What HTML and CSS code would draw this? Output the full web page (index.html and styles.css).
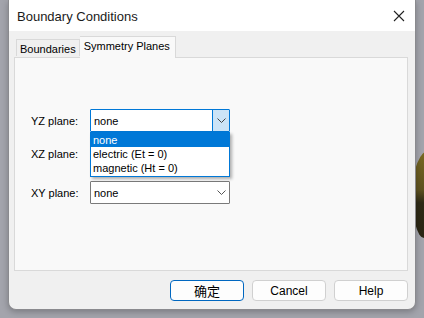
FILE: index.html
```html
<!DOCTYPE html>
<html>
<head>
<meta charset="utf-8">
<link rel="stylesheet" href="styles.css">
</head>
<body>
<div class="desktop">
  <div class="shape shape-top"></div>
  <div class="shape shape-right"></div>
  <div class="window">
    <div class="titlebar">
      <span class="title">Boundary Conditions</span>
      <svg class="close" width="12" height="12" viewBox="0 0 12 12"><path d="M1 1L11 11M11 1L1 11" stroke="#222" stroke-width="1.1" fill="none"/></svg>
    </div>
    <div class="client">
      <div class="tabs">
        <div class="tab">Boundaries</div>
        <div class="tab active">Symmetry Planes</div>
      </div>
      <div class="panel">
        <div class="row r1">
          <span class="label">YZ plane:</span>
          <div class="combo open">
            <span class="value">none</span>
            <span class="arrow"><svg width="9" height="5" viewBox="0 0 9 5"><path d="M0.5 0.5L4.5 4.5L8.5 0.5" stroke="#444" fill="none"/></svg></span>
            <div class="list">
              <div class="item sel">none</div>
              <div class="item">electric (Et = 0)</div>
              <div class="item">magnetic (Ht = 0)</div>
            </div>
          </div>
        </div>
        <div class="row r2">
          <span class="label">XZ plane:</span>
        </div>
        <div class="row r3">
          <span class="label">XY plane:</span>
          <div class="combo">
            <span class="value">none</span>
            <span class="arrow"><svg width="9" height="5" viewBox="0 0 9 5"><path d="M0.5 0.5L4.5 4.5L8.5 0.5" stroke="#555" fill="none"/></svg></span>
          </div>
        </div>
      </div>
      <div class="buttons">
        <button class="btn default">确定</button>
        <button class="btn">Cancel</button>
        <button class="btn">Help</button>
      </div>
    </div>
  </div>
</div>
</body>
</html>
```
FILE: styles.css
```css
html, body {
  margin: 0;
  padding: 0;
}
body {
  width: 424px;
  height: 318px;
  overflow: hidden;
  background: #a3a4ac;
  font-family: "Liberation Sans", Arial, "Noto Sans CJK SC", sans-serif;
}
.desktop {
  position: relative;
  width: 424px;
  height: 318px;
  padding-left: 8px;
  box-sizing: border-box;
}
.shape {
  position: absolute;
}
.shape-top {
  left: 293px;
  top: 0;
  width: 40px;
  height: 2px;
  background: #6b5f2a;
}
.shape-right {
  left: 412px;
  top: 150px;
  width: 30px;
  height: 88px;
  background: linear-gradient(180deg, #7a6a22 0%, #5e5220 45%, #2e2a16 60%, #2a2614 100%);
  border-radius: 60% 0 0 40% / 50% 0 0 50%;
}
.window {
  position: relative;
  width: 408px;
  height: 310px;
  border: 1px solid #8a8a8e;
  border-top: 0;
  border-radius: 0 0 8px 8px;
  box-sizing: border-box;
  background: #f0f0f0;
  overflow: hidden;
  box-shadow: 0 2px 6px rgba(0,0,0,0.25);
  display: flex;
  flex-direction: column;
}
.titlebar {
  height: 31px;
  background: #ffffff;
  display: flex;
  align-items: center;
  justify-content: space-between;
  padding: 0 9px 0 8px;
  flex: none;
}
.title {
  font-family: "Liberation Sans", Arial, sans-serif;
  font-size: 13px;
  color: #1a1a1a;
  padding-top: 1px;
}
.close {
  display: block;
  margin-right: 1px;
}
.client {
  flex: 1;
  padding: 6px 7px 0 5px;
  display: flex;
  flex-direction: column;
  font-size: 11px;
  color: #000;
}
.tabs {
  display: flex;
  align-items: flex-end;
  padding-left: 2px;
  height: 20px;
  position: relative;
  z-index: 1;
}
.tab {
  height: 16px;
  padding: 0 3px 0 3px;
  border: 1px solid #d9d9d9;
  border-bottom: 0;
  background: #f0f0f0;
  line-height: 18px;
  margin-bottom: 1px;
}
.tab.active {
  height: 21px;
  background: #f9f9f9;
  border-left: 0;
  padding: 0 5px 0 4px;
  line-height: 19px;
  margin-bottom: -1px;
}
.panel {
  height: 214px;
  border: 1px solid #d9d9d9;
  background: #f9f9f9;
  position: relative;
  box-sizing: border-box;
}
.row {
  position: relative;
  display: flex;
  align-items: center;
  height: 23px;
  padding-left: 16px;
}
.r1 { margin-top: 51px; z-index: 2; }
.r2 { margin-top: 10px; height: 23px; }
.r3 { margin-top: 16px; }
.label {
  width: 59px;
  flex: none;
}
.combo {
  position: relative;
  width: 140px;
  height: 23px;
  box-sizing: border-box;
  border: 1px solid #7a7a7a;
  background: #fff;
  display: flex;
  align-items: center;
  border-radius: 1px;
}
.combo.open {
  border-color: #0078d7;
}
.value {
  flex: 1;
  padding-left: 3px;
  padding-top: 1px;
}
.arrow {
  width: 16px;
  height: 21px;
  display: flex;
  align-items: center;
  justify-content: center;
}
.arrow svg { display: block; }
.combo.open .arrow {
  background: #cce4f7;
  border-left: 1px solid #0078d7;
  width: 16px;
}
.list {
  position: absolute;
  left: -1px;
  top: 22px;
  width: 140px;
  box-sizing: border-box;
  border: 1px solid #0078d7;
  background: #fff;
  box-shadow: 2px 2px 3px rgba(0,0,0,0.3);
  padding: 0 0 1px 0;
}
.item {
  height: 14px;
  line-height: 14px;
  padding-left: 2px;
  white-space: nowrap;
}
.item.sel {
  background: #0078d7;
  color: #fff;
}
.buttons {
  display: flex;
  justify-content: flex-end;
  gap: 8px;
  padding: 9px 0 0 0;
}
.btn {
  width: 74px;
  height: 21px;
  box-sizing: border-box;
  border: 1px solid #d0d0d0;
  border-radius: 4px;
  background: #fdfdfd;
  font-family: "Liberation Sans", Arial, "Noto Sans CJK SC", sans-serif;
  font-size: 12px;
  color: #000;
  padding: 0;
  margin: 0;
}
.btn.default {
  border: 1px solid #0067c0;
  font-size: 13px;
}
```
